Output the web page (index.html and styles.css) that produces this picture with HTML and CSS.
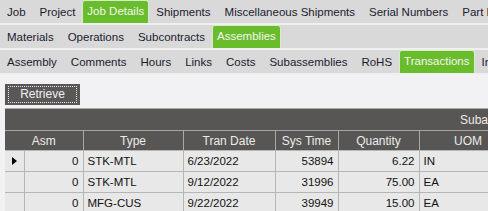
FILE: index.html
```html
<!DOCTYPE html>
<html lang="en">
<head>
    <meta charset="UTF-8">
    <title>Job Details - Transactions</title>
    <link rel="stylesheet" href="styles.css">
</head>
<body>
    <div class="tabbar">
        <span class="tab">Job</span>
        <span class="tab">Project</span>
        <span class="tab active">Job Details</span>
        <span class="tab">Shipments</span>
        <span class="tab">Miscellaneous Shipments</span>
        <span class="tab">Serial Numbers</span>
        <span class="tab">Part Lot</span>
    </div>
    <div class="tabbar">
        <span class="tab">Materials</span>
        <span class="tab">Operations</span>
        <span class="tab">Subcontracts</span>
        <span class="tab active">Assemblies</span>
    </div>
    <div class="tabbar">
        <span class="tab">Assembly</span>
        <span class="tab">Comments</span>
        <span class="tab">Hours</span>
        <span class="tab">Links</span>
        <span class="tab">Costs</span>
        <span class="tab">Subassemblies</span>
        <span class="tab">RoHS</span>
        <span class="tab active">Transactions</span>
        <span class="tab">Indented</span>
    </div>

    <div class="content">
        <button class="btn"><span class="btn-focus">Retrieve</span></button>

        <div class="grid-wrap">
            <table class="grid">
                <colgroup>
                    <col class="c-sel">
                    <col class="c-asm">
                    <col class="c-type">
                    <col class="c-date">
                    <col class="c-time">
                    <col class="c-qty">
                    <col class="c-uom">
                    <col class="c-rest">
                </colgroup>
                <thead>
                    <tr class="group-row">
                        <th colspan="8" class="group-cap">Subassembly</th>
                    </tr>
                    <tr class="head-row">
                        <th colspan="2">Asm</th>
                        <th>Type</th>
                        <th>Tran Date</th>
                        <th>Sys Time</th>
                        <th>Quantity</th>
                        <th>UOM</th>
                        <th>Part</th>
                    </tr>
                </thead>
                <tbody>
                    <tr>
                        <td class="sel"><span class="arrow"></span></td>
                        <td class="num">0</td>
                        <td>STK-MTL</td>
                        <td>6/23/2022</td>
                        <td class="num">53894</td>
                        <td class="num">6.22</td>
                        <td>IN</td>
                        <td></td>
                    </tr>
                    <tr>
                        <td class="sel"></td>
                        <td class="num">0</td>
                        <td>STK-MTL</td>
                        <td>9/12/2022</td>
                        <td class="num">31996</td>
                        <td class="num">75.00</td>
                        <td>EA</td>
                        <td></td>
                    </tr>
                    <tr>
                        <td class="sel"></td>
                        <td class="num">0</td>
                        <td>MFG-CUS</td>
                        <td>9/22/2022</td>
                        <td class="num">39949</td>
                        <td class="num">15.00</td>
                        <td>EA</td>
                        <td></td>
                    </tr>
                </tbody>
            </table>
        </div>
    </div>
</body>
</html>
```

FILE: styles.css
```css
body {
    margin: 0;
    width: 488px;
    height: 211px;
    overflow: hidden;
    background-color: #f2f2f4;
    font-family: "Liberation Sans", Arial, sans-serif;
    color: #1b1b2e;
}

.tabbar {
    display: flex;
    align-items: flex-end;
    height: 23px;
    background-color: #d9d9d9;
    border-bottom: 2px solid #f0f0f0;
    white-space: nowrap;
    overflow: hidden;
}

.tab {
    height: 23px;
    line-height: 25px;
    padding: 0 7px;
    font-size: 11.5px;
}

.active {
    height: 22px;
    line-height: 20px;
    padding: 0 4px;
    background-color: #69bc2c;
    color: #f4f6ee;
    border: 1px solid #d6ecc6;
    border-bottom: none;
    border-radius: 3px 3px 0 0;
}

.content {
    padding: 9px 0 0 5px;
}

.btn {
    display: block;
    width: 75px;
    height: 21px;
    padding: 2px 3px;
    border: none;
    background-color: #5a5856;
    font-family: "Liberation Sans", Arial, sans-serif;
    font-size: 12px;
    color: #f0f0f0;
}

.btn-focus {
    display: block;
    height: 15px;
    line-height: 15px;
    border: 1px dotted #e8e8e8;
}

.grid-wrap {
    margin-top: 3px;
    width: 483px;
    overflow: hidden;
}

.grid {
    width: 600px;
    table-layout: fixed;
    border-collapse: collapse;
    font-size: 11.5px;
}

.c-sel { width: 19px; }
.c-asm { width: 59px; }
.c-type { width: 100px; }
.c-date { width: 92px; }
.c-time { width: 63px; }
.c-qty { width: 81px; }
.c-uom { width: 98px; }
.c-rest { width: 88px; }

.grid th {
    background-color: #585654;
    color: #ecebea;
    font-weight: normal;
    font-size: 12px;
    white-space: nowrap;
    overflow: hidden;
}

.group-row th {
    height: 19px;
    border-top: 1px solid #a9a9a9;
    border-bottom: 1px solid #a4a4a4;
}

.group-cap {
    text-align: left;
    padding-left: 455px;
}

.head-row th {
    height: 19px;
    padding: 0;
    border-right: 1px solid #a8a8a8;
}

.grid td {
    height: 20px;
    padding: 0 4px;
    background-color: #e8e8e8;
    border: 1px solid #b6b6b6;
    color: #121212;
    white-space: nowrap;
}

.grid td.num {
    text-align: right;
}

.grid td.sel {
    padding: 0;
    border-left: none;
}

.arrow {
    display: block;
    width: 0;
    height: 0;
    margin-left: 7px;
    border-top: 4px solid transparent;
    border-bottom: 4px solid transparent;
    border-left: 5px solid #000;
}
```
